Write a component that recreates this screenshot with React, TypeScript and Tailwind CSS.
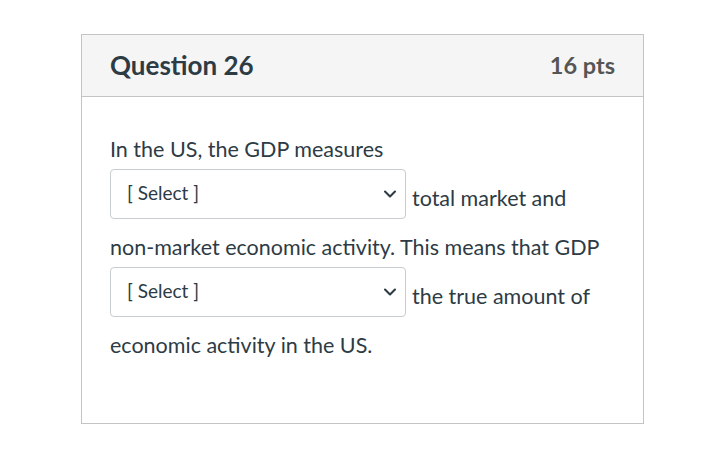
import { ChevronDown } from "lucide-react";

function SelectBox() {
  return (
    <span className="relative -mt-[5px] mr-[6px] inline-block h-[50px] w-[296px] align-[-13px] rounded-[4px] border border-[#c7cdd1] bg-white">
      <span className="absolute left-[16px] top-[10px] text-[19px] leading-[26px] text-[#2d3b45]">[ Select ]</span>
      <ChevronDown className="absolute right-[5px] top-[14px] h-[20px] w-[20px] text-[#2d3b45]" strokeWidth={2.5} />
    </span>
  );
}

export default function App() {
  return (
    <div className="min-h-[463px] bg-white pl-[81px] pt-[34px] font-['Lato','Noto_Sans',sans-serif] text-[#2d3b45]">
      <div className="h-[390px] w-[563px] border border-[#c4c4c4] bg-white">
        <div className="flex h-[62px] items-center justify-between border-b border-[#c4c4c4] bg-[#f5f5f5] px-[28px]">
          <h2 className="text-[26px] font-bold">Question 26</h2>
          <span className="text-[23.5px] font-bold text-[#555]">16 pts</span>
        </div>
        <div className="px-[28px] pt-[28px]">
          <p className="text-[21.5px] leading-[49px]">
            In the US, the GDP measures <SelectBox />total market and{" "}
            <span className="whitespace-nowrap">non-market</span> economic activity. This means that GDP{" "}
            <SelectBox />the true amount of economic activity in the US.
          </p>
        </div>
      </div>
    </div>
  );
}
